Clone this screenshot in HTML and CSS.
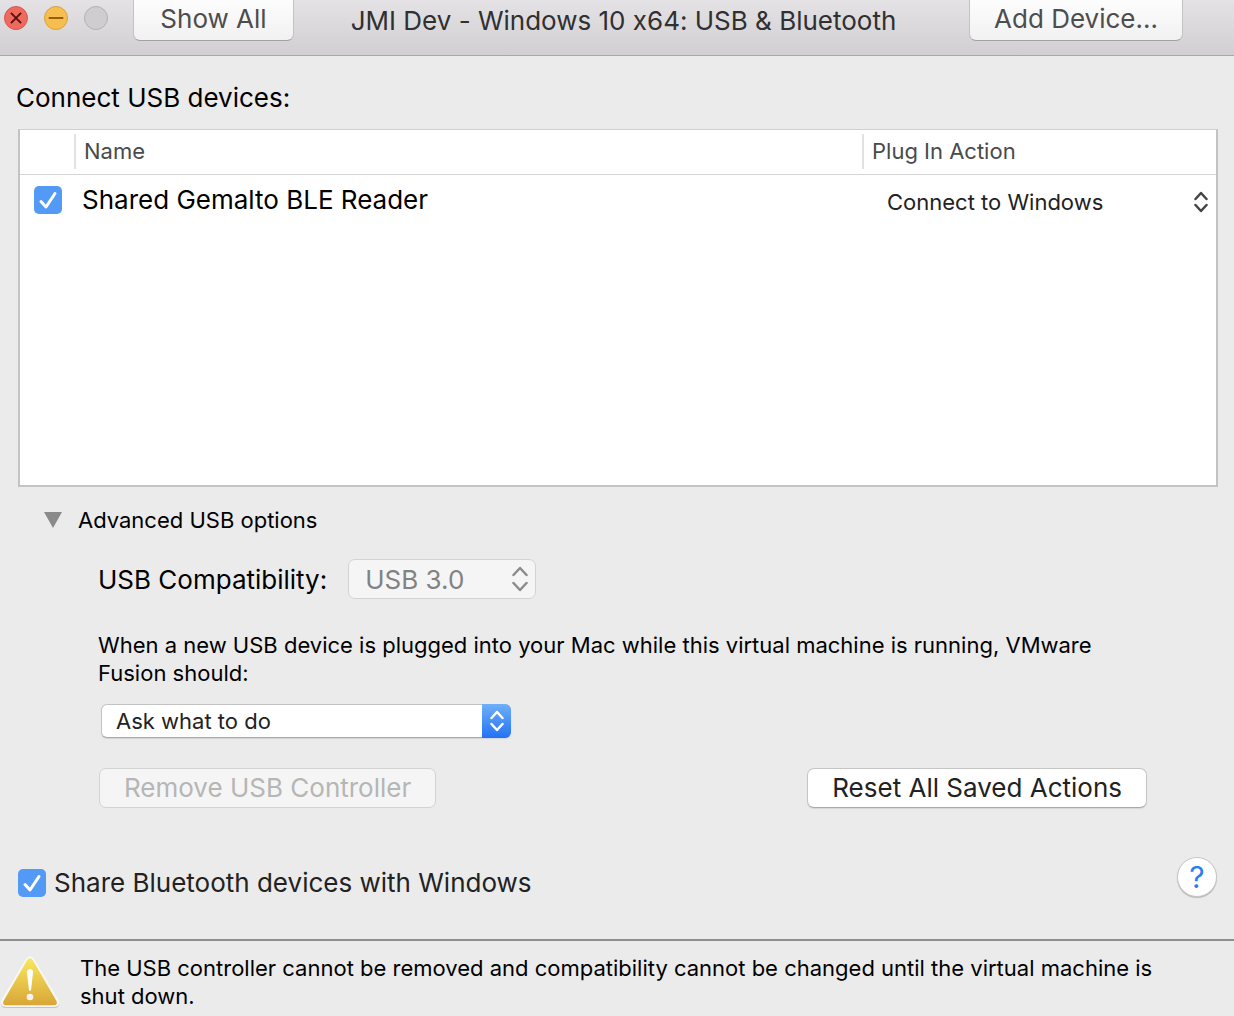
FILE: index.html
```html
<!DOCTYPE html>
<html lang="en">
<head>
<meta charset="utf-8">
<meta name="viewport" content="width=device-width, initial-scale=1">
<title>JMI Dev - Windows 10 x64: USB &amp; Bluetooth</title>
<link rel="stylesheet" href="styles.css">
</head>
<body>
<header class="titlebar">
  <div class="lights">
    <button class="light light-close" type="button" aria-label="Close"><svg viewBox="0 0 24 24"><path d="M6.5 6.5l11 11M17.5 6.5l-11 11" stroke="#5a0d0a"/></svg></button>
    <button class="light light-min" type="button" aria-label="Minimize"><svg viewBox="0 0 24 24"><path d="M4 12h16" stroke="#8f5410"/></svg></button>
    <button class="light light-zoom" type="button" aria-label="Zoom" disabled></button>
  </div>
  <button class="tool tool-show" type="button">Show All</button>
  <h1 class="title">JMI Dev - Windows 10 x64: USB &amp; Bluetooth</h1>
  <button class="tool tool-add" type="button">Add Device...</button>
</header>
<main class="pane">
  <h2 class="heading">Connect USB devices:</h2>
  <div class="devices">
    <table class="grid">
      <colgroup><col class="col-check"><col><col class="col-action"></colgroup>
      <thead>
        <tr><th aria-label="Connected"></th><th><span class="cell">Name</span></th><th><span class="cell">Plug In Action</span></th></tr>
      </thead>
      <tbody>
        <tr>
          <td class="td-check"><input class="check" type="checkbox" id="dev" checked></td>
          <td class="td-name"><label for="dev">Shared Gemalto BLE Reader</label></td>
          <td>
            <div class="pick pick-plain">
              <select aria-label="Plug In Action"><option>Connect to Windows</option></select>
              <svg class="arrows" viewBox="0 0 14 22"><path d="M1.500 8L7 2l5.500 6M1.500 14L7 20l5.500-6"/></svg>
            </div>
          </td>
        </tr>
      </tbody>
    </table>
  </div>
  <details class="advanced" open>
    <summary class="summary"><svg class="triangle" viewBox="0 0 18 16"><path d="M0 0h18L9 16z"/></svg>Advanced USB options</summary>
    <div class="options">
      <div class="compat">
        <label for="compat">USB Compatibility:</label>
        <div class="pick pick-disabled">
          <select id="compat" disabled><option>USB 3.0</option></select>
          <svg class="arrows" viewBox="0 0 16 26"><path d="M1.500 9L8 2l6.500 7M1.500 17L8 24l6.500-7"/></svg>
        </div>
      </div>
      <label class="note" for="plug">When a new USB device is plugged into your Mac while this virtual machine is running, VMware Fusion should:</label>
      <div class="pick pick-blue">
        <select id="plug"><option>Ask what to do</option></select>
        <span class="cap"><svg class="arrows" viewBox="0 0 14 22"><path d="M1.500 8L7 2l5.500 6M1.500 14L7 20l5.500-6"/></svg></span>
      </div>
      <div class="actions">
        <button class="push" type="button" disabled>Remove USB Controller</button>
        <button class="push" type="button">Reset All Saved Actions</button>
      </div>
    </div>
  </details>
  <div class="share">
    <label class="share-label"><input class="check" type="checkbox" checked>Share Bluetooth devices with Windows</label>
    <button class="help" type="button" aria-label="Help">?</button>
  </div>
</main>
<footer class="warning">
  <svg class="alert" viewBox="0 0 60 54" aria-hidden="true">
    <defs><linearGradient id="gold" x1="0" y1="0" x2="0" y2="1"><stop offset="0" stop-color="#f9e75f"/><stop offset="1" stop-color="#d9a637"/></linearGradient></defs>
    <path d="M25.500 5.500Q30-1 34.500 5.500L58 46Q60.500 52.500 54 53H6Q-.5 52.500 2 46z" fill="#aaa" opacity=".6"/>
    <path d="M25.500 4.500Q30-2 34.500 4.500L58.500 45Q60.500 51.500 54 52H6Q-.5 51.500 1.500 45z" fill="#f8f8f6"/>
    <path d="M27 5.500Q30 1 33 5.500L56.500 46Q58 50 54 50.300H6Q2 50 3.500 46z" fill="url(#gold)"/>
    <path d="M26.800 16Q30 12 33.200 16L31 35Q30 37 29 35z" fill="#fff"/>
    <circle cx="30" cy="42" r="3.300" fill="#f3f3f3"/>
  </svg>
  <p class="warning-text">The USB controller cannot be removed and compatibility cannot be changed until the virtual machine is shut down.</p>
</footer>
</body>
</html>
```
FILE: styles.css
```css
* { box-sizing: border-box; }
body {
  margin: 0;
  background: #ebebeb;
  color: #000;
  font-family: Inter, Roboto, "Liberation Sans", sans-serif;
  font-size: 26px;
  line-height: 32px;
  font-variant-ligatures: no-contextual;
}
button, select { font: inherit; color: #222; }
svg { display: block; }

.titlebar {
  display: flex;
  align-items: flex-start;
  height: 56px;
  padding: 0 51px 0 4px;
  background: linear-gradient(#e4e2e4, #d1cfd1);
  border-bottom: 1px solid #a9a8a9;
}
.lights { display: flex; gap: 16px; padding-top: 6px; margin-right: 25px; }
.light { width: 24px; height: 24px; padding: 0; border: 1px solid; border-radius: 50%; }
.light svg { width: 22px; height: 22px; fill: none; stroke-width: 2; }
.light-close { background: #ee6a5f; border-color: #d5584e; }
.light-min { background: #f6be4f; border-color: #dba23c; }
.light-zoom { background: #cfcecf; border-color: #b3b2b3; }
.tool {
  height: 41px;
  padding: 0 0 2px;
  color: #4d4d4d;
  background: linear-gradient(#fdfdfd, #f1f1f1);
  border: 1px solid #c4c3c4;
  border-top: 0;
  border-bottom-color: #a3a2a3;
  border-radius: 0 0 7px 7px;
}
.tool-show { width: 161px; }
.tool-add { width: 214px; }
.title {
  flex: 1;
  margin: 0;
  padding: 5px 16px 0 0;
  color: #303030;
  font-size: 26px;
  font-weight: 400;
  text-align: center;
  white-space: nowrap;
}

.pane { padding: 26px 16px 42px 18px; }
.heading { margin: 0 0 15px -2px; font-size: 26px; font-weight: 400; }
.devices {
  min-height: 358px;
  background: #fff;
  border: 2px solid #c3c3c3;
  border-top: 1px solid #d0d0d0;
}
.grid { width: 100%; border-collapse: separate; border-spacing: 0; table-layout: fixed; }
.col-check { width: 54px; }
.col-action { width: 354px; }
.grid th {
  height: 45px;
  padding: 0 0 2px;
  border-bottom: 1px solid #d4d4d4;
  color: #4a4a4a;
  font-size: 22px;
  font-weight: 400;
  text-align: left;
}
.cell { display: block; padding-left: 8px; border-left: 2px solid #e2e2e2; line-height: 35px; }
.grid td { height: 50px; padding: 0; }
.grid .td-check { padding-left: 14px; }
.grid .td-name { padding-left: 8px; }
.check {
  display: block;
  flex: none;
  width: 28px;
  height: 28px;
  margin: 0;
  appearance: none;
  border-radius: 5px;
  background: #5399f6 url("data:image/svg+xml,%3Csvg xmlns='http://www.w3.org/2000/svg' viewBox='0 0 28 28'%3E%3Cpath d='M7 15.500l5 5.500L21 7.500' fill='none' stroke='%23fff' stroke-width='3' stroke-linecap='round' stroke-linejoin='round'/%3E%3C/svg%3E");
}

.pick { position: relative; }
.pick select {
  display: block;
  width: 100%;
  height: 34px;
  margin: 0;
  appearance: none;
  background: none;
  border: 0;
  font-size: 22px;
  opacity: 1;
}
.arrows {
  width: 14px;
  height: 22px;
  fill: none;
  stroke: #444;
  stroke-width: 2.500;
  stroke-linecap: round;
  stroke-linejoin: round;
}
.pick > .arrows { position: absolute; top: 0; bottom: 0; margin: auto 0; right: 8px; pointer-events: none; }
.pick-plain { margin-top: 4px; }
.pick-plain select { padding: 0 24px 0 25px; }
.pick-disabled { width: 188px; }
.pick-disabled select {
  height: 40px;
  padding: 2px 32px 0 16px;
  font-size: 26px;
  color: #828282;
  background: #f5f5f5;
  border: 1px solid #d3d3d3;
  border-radius: 7px;
}
.pick-disabled .arrows { width: 16px; height: 26px; stroke: #8c8c8c; }
.pick-blue { width: 410px; margin-left: 3px; }
.pick-blue select {
  padding: 0 40px 0 14px;
  background: #fff;
  border: 1px solid #c3c3c3;
  border-bottom-color: #a9a9a9;
  border-radius: 6px;
  box-shadow: 0 1px 1px #d4d4d4;
}
.cap {
  position: absolute;
  top: 0;
  right: 0;
  bottom: 0;
  display: grid;
  place-items: center;
  width: 29px;
  border-radius: 0 6px 6px 0;
  background: linear-gradient(#6fb0f8, #2272f6);
  pointer-events: none;
}
.cap .arrows { stroke: #fff; }

.advanced { margin-top: 19px; }
.summary {
  display: flex;
  align-items: center;
  gap: 16px;
  padding-left: 26px;
  font-size: 22px;
  line-height: 28px;
  list-style: none;
}
.triangle { width: 18px; height: 16px; fill: #8a8a8a; }
.options { padding: 25px 71px 0 80px; }
.compat { display: flex; align-items: center; gap: 21px; }
.compat label { padding-top: 2px; }
.note { display: block; margin: 32px 0 17px; font-size: 22px; line-height: 28px; }
.actions { display: flex; justify-content: space-between; margin: 30px 0 0 1px; }
.push {
  height: 40px;
  padding: 0 24px;
  background: #fff;
  border: 1px solid #c6c6c6;
  border-bottom-color: #a9a9a9;
  border-radius: 7px;
  box-shadow: 0 1px 1px #d6d6d6;
}
.push:disabled { color: #b6b6b6; background: #f5f5f5; border-color: #d3d3d3; box-shadow: none; }

.share { display: flex; align-items: flex-end; justify-content: space-between; margin: 49px 1px 0 0; }
.share-label { display: flex; align-items: center; gap: 8px; color: #222; line-height: 28px; }
.help {
  width: 40px;
  height: 40px;
  padding: 0;
  color: #2a7bf6;
  background: #fff;
  border: 1px solid #c6c6c6;
  border-radius: 50%;
  box-shadow: 0 1px 1px #b9b9b9;
  font-size: 30px;
}
.warning {
  display: flex;
  align-items: flex-start;
  gap: 20px;
  padding: 13px 34px 6px 0;
  border-top: 2px solid #8d8d8d;
}
.alert { flex: none; width: 60px; height: 54px; margin-top: 1px; }
.warning-text { margin: 0; font-size: 22px; line-height: 28px; }
```
